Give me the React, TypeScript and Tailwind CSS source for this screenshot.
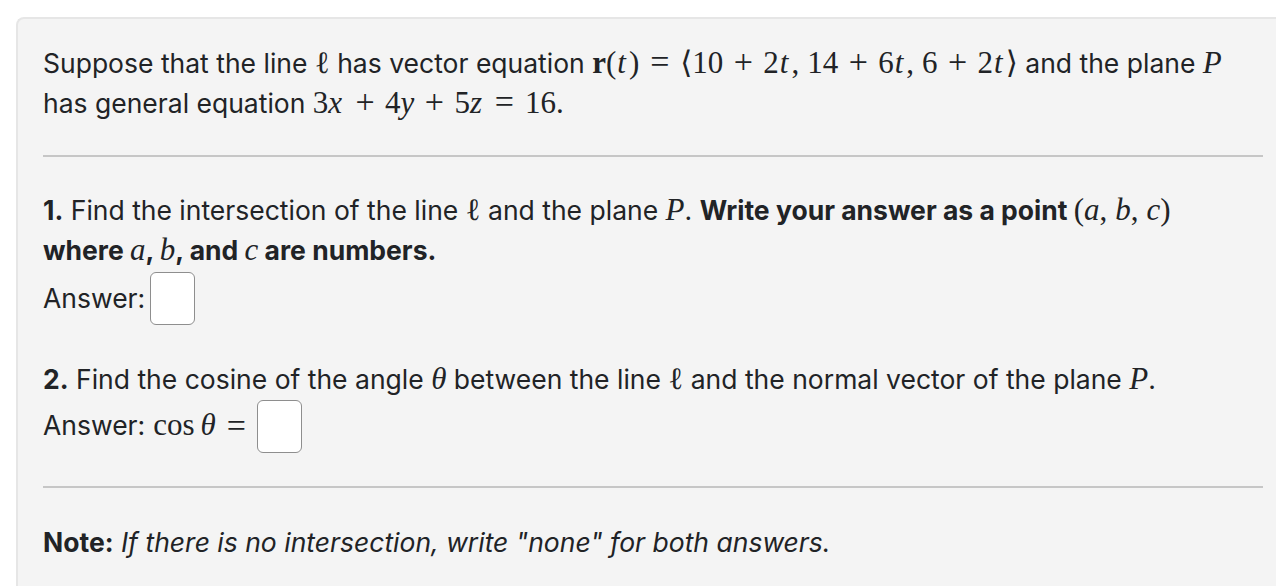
import React from "react";

const serif = "font-['Liberation_Serif','DejaVu_Serif',serif]";

function V({ children, w }: { children: React.ReactNode; w?: string }) {
  return <span className={`${serif} italic text-[31px] leading-none ${w ?? ""}`}>{children}</span>;
}
function T() {
  return <span className={`${serif} italic text-[31px] leading-none pl-[1px] pr-[3px]`}>t</span>;
}
function N({ children }: { children: React.ReactNode }) {
  return <span className={`${serif} not-italic text-[31px] leading-none`}>{children}</span>;
}
function Op({ children }: { children: React.ReactNode }) {
  return (
    <span className={`${serif} not-italic text-[34px] leading-none inline-block w-[24px] text-center mx-[8px]`}>
      {children}
    </span>
  );
}
function Rel({ children }: { children: React.ReactNode }) {
  return (
    <span className={`${serif} not-italic text-[34px] leading-none inline-block w-[25px] text-center mx-[8px]`}>
      {children}
    </span>
  );
}
function Ell() {
  return <span className={`${serif} text-[31px] leading-none`}>ℓ</span>;
}
function Comma() {
  return (
    <>
      <N>,</N>
      <span className="inline-block w-[8px]" />
    </>
  );
}
function Box() {
  return <span className="inline-block w-[45px] h-[53px] bg-white border border-[#8e8e8e] rounded-[6px] align-middle" />;
}

export default function App() {
  return (
    <div className="min-h-screen bg-white pt-[17px] pl-[16px] font-['Inter','Noto_Sans',sans-serif] text-[26.5px] text-[#212326]">
      <div className="border-l-2 border-t-2 border-[#e6e6e6] rounded-tl-[8px] bg-[#f4f4f4] pl-[25px] pr-[13px] pt-[24px] pb-[40px]">
        <p className="leading-[40px]">
          Suppose that the line <Ell /> has vector equation{" "}
          <span className="whitespace-nowrap">
            <span className={`${serif} font-bold text-[31px] leading-none`}>r</span>
            <N>(</N>
            <T />
            <N>)</N>
            <Rel>=</Rel>
            <N>⟨10</N>
            <Op>+</Op>
            <N>2</N>
            <T />
            <Comma />
            <N>14</N>
            <Op>+</Op>
            <N>6</N>
            <T />
            <Comma />
            <N>6</N>
            <Op>+</Op>
            <N>2</N>
            <T />
            <N>⟩</N>
          </span>{" "}
          and the plane <V>P</V>
          <br />
          has general equation{" "}
          <span className="whitespace-nowrap">
            <N>3</N>
            <V w="pr-[3px]">x</V>
            <Op>+</Op>
            <N>4</N>
            <V>y</V>
            <Op>+</Op>
            <N>5</N>
            <V w="pr-[2px]">z</V>
            <Rel>=</Rel>
            <N>16.</N>
          </span>
        </p>

        <div className="h-[2px] bg-[#c6c6c6] mt-[32px] mb-[33px]" />

        <p className="leading-[40px]">
          <b>1.</b> Find the intersection of the line <Ell /> and the plane <V>P</V>.{" "}
          <b>
            Write your answer as a point{" "}
            <span className="font-normal whitespace-nowrap">
              <N>(</N>
              <V>a</V>
              <Comma />
              <V>b</V>
              <Comma />
              <V>c</V>
              <N>)</N>
            </span>
            <br />
            where <span className="font-normal"><V>a</V></span>, <span className="font-normal"><V>b</V></span>, and{" "}
            <span className="font-normal"><V>c</V></span> are numbers.
          </b>
        </p>
        <div className="flex items-center h-[53px] mt-[2px] gap-[5px]">
          <span>Answer:</span>
          <Box />
        </div>

        <p className="leading-[40px] mt-[34px]">
          <b>2.</b> Find the cosine of the angle <V>θ</V> between the line <Ell /> and the normal vector of the plane <V>P</V>.
        </p>
        <div className="flex items-center h-[54px]">
          <span>Answer:</span>
          <span className="ml-[8px]"><N>cos</N></span>
          <span className="ml-[6px]"><V>θ</V></span>
          <Rel>=</Rel>
          <Box />
        </div>

        <div className="h-[2px] bg-[#c6c6c6] mt-[33px] mb-[34px]" />

        <p className="leading-[40px]">
          <b>Note:</b> <i className="text-[26.5px]">If there is no intersection, write "none" for both answers.</i>
        </p>
      </div>
    </div>
  );
}
